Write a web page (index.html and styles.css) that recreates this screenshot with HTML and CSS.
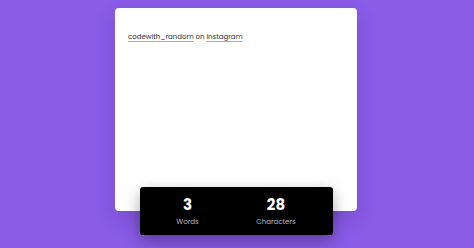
FILE: index.html
```html
<!DOCTYPE html>
<html>
<head>
<meta charset="utf-8">
<link rel="stylesheet" href="styles.css">
</head>
<body>
<main class="wrap">
  <section class="card">
    <p class="text"><span class="sp">codewith_random</span> on <span class="sp">instagram</span></p>
  </section>
  <section class="stats">
    <div class="stat">
      <div class="num">3</div>
      <div class="label">Words</div>
    </div>
    <div class="stat">
      <div class="num">28</div>
      <div class="label">Characters</div>
    </div>
  </section>
</main>
</body>
</html>
```

FILE: styles.css
```css
html, body {
  margin: 0;
  padding: 0;
}
body {
  width: 474px;
  height: 248px;
  background: #8a5ce8;
  font-family: "Poppins", "Inter", "Noto Sans", sans-serif;
  overflow: hidden;
}
.wrap {
  display: flex;
  flex-direction: column;
  align-items: center;
  padding-top: 8px;
  padding-right: 2px;
}
.card {
  width: 242px;
  height: 203px;
  box-sizing: border-box;
  background: #fff;
  border-radius: 4px;
  padding: 23px 13px;
  box-shadow: 0 8px 20px rgba(40, 10, 90, 0.18);
}
.text {
  margin: 0;
  font-size: 7px;
  line-height: 11px;
  color: #333;
}
.sp {
  text-decoration: underline;
  text-decoration-color: #f08c98;
  text-underline-offset: 2px;
  text-decoration-thickness: 1px;
}
.stats {
  width: 193px;
  height: 48px;
  box-sizing: border-box;
  margin-top: -24px;
  background: #000;
  border-radius: 3px;
  display: flex;
  justify-content: space-around;
  align-items: center;
  padding: 0 8px;
  box-shadow: 0 6px 16px rgba(0, 0, 0, 0.35);
}
.stat {
  display: flex;
  flex-direction: column;
  align-items: center;
}
.num {
  color: #fff;
  font-weight: 700;
  font-size: 15px;
  line-height: 18px;
}
.label {
  color: #b9b9c4;
  font-size: 7px;
  line-height: 11px;
  margin-top: 2px;
}
```
